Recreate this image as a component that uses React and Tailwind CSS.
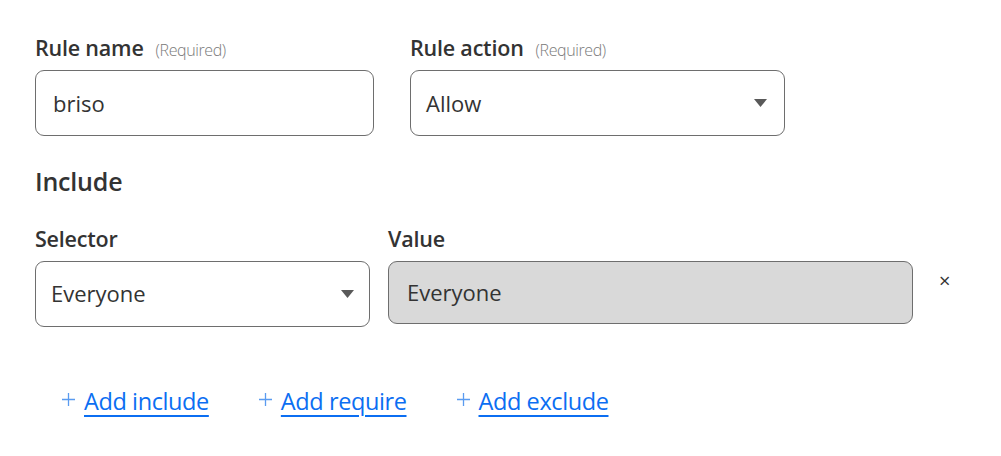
import React from 'react';

const font = { fontFamily: '"Open Sans", "Noto Sans", sans-serif' };

function Caret() {
  return (
    <svg width="13" height="8" viewBox="0 0 13 8" className="shrink-0">
      <path d="M0 0 H13 L6.5 8 Z" fill="#595959" />
    </svg>
  );
}

function Plus() {
  return (
    <svg width="13" height="13" viewBox="0 0 13 13" className="shrink-0 -mt-[3px]">
      <path d="M6.5 0 V13 M0 6.5 H13" stroke="#5a9bf0" strokeWidth="1.3" />
    </svg>
  );
}

function Label({ children, hint }) {
  return (
    <div className="flex items-baseline h-[28px] mb-[8px]">
      <span className="text-[21.5px] leading-[28px] font-semibold text-[#333] tracking-[-0.2px]">{children}</span>
      {hint && <span className="ml-[12px] text-[16px] leading-[28px] font-light text-[#7a7a7a] tracking-[-0.4px]">{hint}</span>}
    </div>
  );
}

function AddLink({ children }) {
  return (
    <a href="#" className="flex items-center gap-[9px] text-[#0b6ef2]">
      <Plus />
      <span className="text-[23.5px] leading-[34px] underline underline-offset-[5px] decoration-[2px] tracking-[-0.4px]">{children}</span>
    </a>
  );
}

export default function App() {
  return (
    <div className="bg-white w-[1001px] h-[456px] pl-[35px] pt-[34px] text-[#333]" style={font}>
      <div className="flex gap-[36px]">
        <div className="w-[339px]">
          <Label hint="(Required)">Rule name</Label>
          <div className="h-[66px] border border-[#6e6e6e] rounded-[9px] flex items-center px-[17px] text-[22px]">
            briso
          </div>
        </div>
        <div className="w-[375px]">
          <Label hint="(Required)">Rule action</Label>
          <div className="h-[66px] border border-[#6e6e6e] rounded-[9px] flex items-center justify-between pl-[15px] pr-[17px] text-[22px]">
            <span>Allow</span>
            <Caret />
          </div>
        </div>
      </div>

      <h2 className="mt-[27px] text-[25px] font-semibold text-[#333] tracking-[-0.2px]">Include</h2>

      <div className="flex items-start mt-[24px]">
        <div className="w-[335px]">
          <Label>Selector</Label>
          <div className="h-[66px] border border-[#6e6e6e] rounded-[9px] flex items-center justify-between pl-[15px] pr-[15px] text-[22px]">
            <span>Everyone</span>
            <Caret />
          </div>
        </div>
        <div className="w-[525px] ml-[18px]">
          <Label>Value</Label>
          <div className="h-[63px] border border-[#6e6e6e] rounded-[9px] bg-[#d9d9d9] flex items-center px-[18px] text-[22px]">
            Everyone
          </div>
        </div>
        <button className="ml-[26px] mt-[46px] text-[20px] leading-none text-[#333]">×</button>
      </div>

      <div className="flex gap-[50px] mt-[57px] pl-[27px]">
        <AddLink>Add include</AddLink>
        <AddLink>Add require</AddLink>
        <AddLink>Add exclude</AddLink>
      </div>
    </div>
  );
}
